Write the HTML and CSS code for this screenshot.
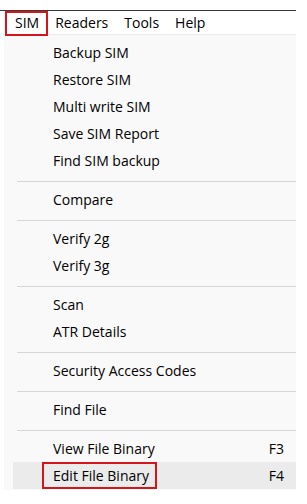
FILE: index.html
```html
<!DOCTYPE html>
<html lang="en">
<head>
    <meta charset="UTF-8">
    <meta name="viewport" content="width=device-width, initial-scale=1.0">
    <title>SIM menu</title>
    <link rel="stylesheet" href="styles.css">
</head>
<body>
    <div class="window">
        <!-- menu bar -->
        <nav class="menubar">
            <span class="menubar-item marked">SIM</span>
            <span class="menubar-item">Readers</span>
            <span class="menubar-item">Tools</span>
            <span class="menubar-item">Help</span>
        </nav>

        <!-- SIM dropdown -->
        <ul class="dropdown">
            <li class="item">Backup SIM</li>
            <li class="item">Restore SIM</li>
            <li class="item">Multi write SIM</li>
            <li class="item">Save SIM Report</li>
            <li class="item">Find SIM backup</li>
            <li class="sep"></li>
            <li class="item">Compare</li>
            <li class="sep"></li>
            <li class="item">Verify 2g</li>
            <li class="item">Verify 3g</li>
            <li class="sep"></li>
            <li class="item">Scan</li>
            <li class="item">ATR Details</li>
            <li class="sep"></li>
            <li class="item">Security Access Codes</li>
            <li class="sep"></li>
            <li class="item">Find File</li>
            <li class="sep"></li>
            <li class="item"><span>View File Binary</span><span class="key">F3</span></li>
            <li class="item hover"><span class="marked">Edit File Binary</span><span class="key">F4</span></li>
        </ul>
    </div>
</body>
</html>
```

FILE: styles.css
```css
body {
    margin: 0;
    padding-top: 10px;
    background: #fff;
    font-family: 'Open Sans', 'Noto Sans', sans-serif;
    font-size: 14px;
    color: #000;
}

.window {
    width: 296px;
    border-top: 1px solid #3a3a3a;
}

/* menu bar */
.menubar {
    display: flex;
    height: 23px;
    align-items: center;
    padding-left: 15px;
    gap: 16px;
    background: #fff;
}

/* red highlight boxes */
.marked {
    position: relative;
}

.marked::after {
    content: '';
    position: absolute;
    left: -10px;
    right: -9px;
    top: -2px;
    bottom: -4px;
    border: 2px solid #d6141c;
}

/* dropdown */
.dropdown {
    list-style: none;
    margin: 0 0 0 4px;
    padding: 4px 0 1px;
    background: #f9f9f9;
    border-top: 1px solid #ececec;
}

.item {
    display: flex;
    justify-content: space-between;
    align-items: center;
    height: 27px;
    margin-left: 9px;
    padding: 0 12px 0 40px;
}

.item.hover {
    background: #ebebeb;
}

.item.hover .marked::after {
    left: -11px;
    right: -8px;
    top: -4px;
    bottom: -4px;
}

.sep {
    height: 1px;
    margin: 7px 0 4px 13px;
    background: #d6d6d6;
}
```
